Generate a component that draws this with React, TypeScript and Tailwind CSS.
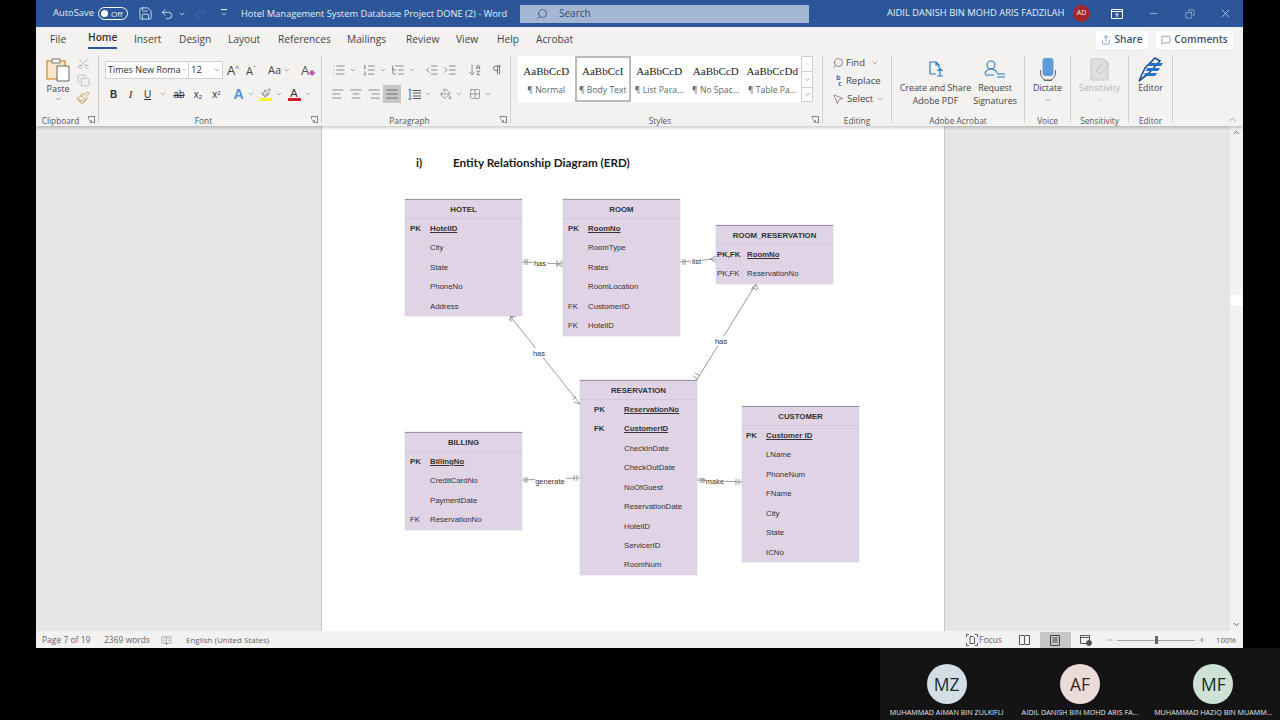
import type { ReactNode } from 'react';
import {
  AlignCenter,
  AlignJustify,
  AlignLeft,
  AlignRight,
  ArrowDownAZ,
  BookOpenText,
  ChevronDown,
  ChevronUp,
  Copy,
  Grid2x2,
  Indent,
  List,
  ListOrdered,
  ListTree,
  MessageSquare,
  Minus,
  MousePointer2,
  Outdent,
  PaintBucket,
  Paintbrush,
  Pilcrow,
  Plus,
  Redo2,
  Save,
  Scissors,
  Search,
  Share,
  Undo2,
  X,
} from 'lucide-react';

function Caret({ className = 'text-[#666]' }: { className?: string }) {
  return <ChevronDown size={8} strokeWidth={1.5} className={className} />;
}

function Slot({ w, children, className = '' }: { w: string; children: ReactNode; className?: string }) {
  return <div className={`flex shrink-0 items-center justify-center gap-[3px] ${w} ${className}`}>{children}</div>;
}

function Launcher() {
  return (
    <svg width="7" height="7" viewBox="0 0 8 8" className="absolute bottom-[0px] right-[3px]" fill="none" stroke="#666">
      <path d="M.5 3V.5H7.5V7.5H5M1 4l3 3M4 5v2H2" />
    </svg>
  );
}

function Group({ w, label, children, launcher }: { w: string; label: string; children: ReactNode; launcher?: boolean }) {
  return (
    <div className={`relative mt-[4px] flex h-[68px] shrink-0 flex-col border-r border-[#d2d0ce] ${w}`}>
      <div className="flex h-[60px] shrink-0 flex-col">{children}</div>
      <div className={`whitespace-nowrap text-center text-[8.3px] leading-[11px] text-[#555] ${launcher ? 'pr-[13px]' : ''}`}>{label}</div>
      {launcher && <Launcher />}
    </div>
  );
}

function TitleBar() {
  return (
    <div className="flex h-[27px] items-center bg-[#2b579a] text-[9.4px] text-[#e8edf5]">
      <span className="ml-[17px] w-[45px]">AutoSave</span>
      <div className="flex h-[13px] w-[30px] items-center gap-[3px] rounded-full border border-white pl-[2px]">
        <span className="h-[7px] w-[7px] rounded-full bg-white" />
        <span className="text-[8px] leading-none">Off</span>
      </div>
      <Save size={15} strokeWidth={1.3} className="ml-[10px]" />
      <Undo2 size={14} strokeWidth={1.4} className="ml-[7px]" />
      <ChevronDown size={8} className="ml-[4px]" />
      <Redo2 size={13} strokeWidth={1.3} className="ml-[8px] text-[#4a73b0]" />
      <div className="ml-[12px] flex w-[9px] flex-col items-center">
        <span className="h-px w-[6px] bg-[#e8edf5]" />
        <ChevronDown size={8} />
      </div>
      <span className="ml-[13px] w-[279px] whitespace-nowrap text-[9.3px]">Hotel Management System Database Project DONE (2)  -  Word</span>
      <div className="flex h-[18px] w-[289px] items-center bg-[#a3b6d4] text-[#304a72]">
        <Search size={12} strokeWidth={1.5} className="ml-[16px] -scale-x-100" />
        <span className="ml-[11px] text-[10px]">Search</span>
      </div>
      <span className="ml-[78px] w-[177px] whitespace-nowrap">AIDIL DANISH BIN MOHD ARIS FADZILAH</span>
      <span className="ml-[9px] flex h-[17px] w-[17px] items-center justify-center rounded-full bg-[#a4262c] text-[7px]">AD</span>
      <svg width="12" height="10" viewBox="0 0 12 10" fill="none" stroke="white" className="ml-[21px]">
        <path d="M.5.5h11v9H.5zM.5 2.500h11M6 8V4.500M4.500 6L6 4.500 7.500 6" />
      </svg>
      <Minus size={11} strokeWidth={1.2} className="ml-[25px]" />
      <Copy size={10} strokeWidth={1.2} className="ml-[26px] -scale-x-100" />
      <X size={13} strokeWidth={1.3} className="ml-[24px]" />
    </div>
  );
}

const tabs = [
  { name: 'Insert', w: 'w-[45px]' },
  { name: 'Design', w: 'w-[49px]' },
  { name: 'Layout', w: 'w-[50px]' },
  { name: 'References', w: 'w-[69px]' },
  { name: 'Mailings', w: 'w-[59px]' },
  { name: 'Review', w: 'w-[50px]' },
  { name: 'View', w: 'w-[41px]' },
  { name: 'Help', w: 'w-[39px]' },
  { name: 'Acrobat', w: 'w-[50px]' },
];

function TabRow() {
  return (
    <div className="flex h-[24px] items-center bg-[#f3f2f1] pt-[1px] text-[10.2px] text-[#444]">
      <span className="ml-[14px] w-[38px]">File</span>
      <div className="flex w-[46px] flex-col">
        <span className="font-semibold text-[#333]">Home</span>
        <span className="mt-[1px] h-[2px] w-[29px] bg-[#2b579a]" />
      </div>
      {tabs.map((t) => (
        <span key={t.name} className={t.w}>
          {t.name}
        </span>
      ))}
      <div className="ml-[510px] flex h-[18px] w-[52px] items-center justify-center gap-[3px] bg-white text-[#2b579a]">
        <Share size={10} strokeWidth={1.3} />
        <span className="font-semibold text-[#44546f]">Share</span>
      </div>
      <div className="ml-[8px] flex h-[18px] w-[77px] items-center justify-center gap-[3px] bg-white">
        <MessageSquare size={10} strokeWidth={1.2} />
        <span className="font-semibold text-[#44546f]">Comments</span>
      </div>
    </div>
  );
}

function ClipboardGroup() {
  return (
    <Group w="w-[63px]" label="Clipboard" launcher>
      <div className="flex pt-[2px]">
        <div className="ml-[8px] flex w-[28px] flex-col items-center">
          <svg width="26" height="26" viewBox="0 0 26 26" fill="none">
            <path d="M2 4h18v18H2z" fill="#f8e6c8" stroke="#d99a4c" strokeWidth="1.5" />
            <path d="M7 2h8v4H7z" fill="#fff" stroke="#777" />
            <path d="M12 9h12v15H12z" fill="#fff" stroke="#666" />
          </svg>
          <span className="text-[9px] leading-[12px] text-[#444]">Paste</span>
          <Caret />
        </div>
        <div className="ml-[4px] flex flex-col items-center gap-[4px] text-[#999]">
          <Scissors size={13} strokeWidth={1} className="-rotate-90" />
          <Copy size={13} strokeWidth={1} />
          <Paintbrush size={14} strokeWidth={1.4} className="text-[#c78a3c]" />
        </div>
      </div>
    </Group>
  );
}

function FontGroup() {
  return (
    <Group w="w-[223px]" label="Font" launcher>
      <div className="mt-[6px] flex h-[18px] items-center pl-[6px]">
        <div className="flex h-[18px] w-[84px] items-center justify-between border border-[#d2d0ce] bg-white pl-[2px] pr-[1px] text-[9px] text-[#333]">
          <span className="whitespace-nowrap">Times New Roma</span>
          <Caret />
        </div>
        <div className="flex h-[18px] w-[34px] items-center justify-between border border-l-0 border-[#d2d0ce] bg-white pl-[2px] pr-[1px] text-[9.5px] text-[#333]">
          <span>12</span>
          <Caret />
        </div>
        <span className="ml-[4px] w-[19px] text-[13px] leading-none text-[#444]">A<sup className="text-[7px]">^</sup></span>
        <span className="w-[18px] text-[11px] leading-none text-[#444]">A<sup className="text-[7px]">ˇ</sup></span>
        <span className="ml-[4px] flex w-[26px] items-center gap-[2px] text-[11px] text-[#444]">Aa<Caret /></span>
        <span className="ml-[7px] text-[13px] leading-none text-[#555]">A<span className="text-[8px] text-[#c054b8]">◆</span></span>
      </div>
      <div className="mt-[6px] flex h-[18px] items-center pl-[6px] font-['Liberation_Sans'] text-[#333]">
        <Slot w="w-[17px]"><b className="text-[10px]">B</b></Slot>
        <Slot w="w-[17px]"><i className="font-['Liberation_Serif'] text-[11px]">I</i></Slot>
        <Slot w="w-[17px]"><u className="text-[10px]">U</u></Slot>
        <Slot w="w-[13px]"><Caret /></Slot>
        <Slot w="w-[20px]"><span className="text-[10px] line-through">ab</span></Slot>
        <Slot w="w-[18px]"><span className="text-[10px]">x<sub className="text-[6px]">2</sub></span></Slot>
        <Slot w="w-[19px]"><span className="text-[10px]">x<sup className="text-[6px]">2</sup></span></Slot>
        <Slot w="w-[31px]" className="pl-[5px]">
          <span className="text-[14px] font-bold leading-none text-[#4a90d9]">A</span>
          <Caret />
        </Slot>
        <Slot w="w-[28px]">
          <div className="flex flex-col items-center">
            <Paintbrush size={10} strokeWidth={1.2} />
            <span className="h-[3px] w-[12px] bg-[#f5ee2e]" />
          </div>
          <Caret />
        </Slot>
        <Slot w="w-[29px]">
          <div className="flex flex-col items-center">
            <span className="text-[11px] leading-[10px]">A</span>
            <span className="h-[3px] w-[13px] bg-[#d01c24]" />
          </div>
          <Caret />
        </Slot>
      </div>
    </Group>
  );
}

function ParagraphGroup() {
  return (
    <Group w="w-[189px]" label="Paragraph" launcher>
      <div className="mt-[6px] flex h-[18px] items-center pl-[7px] text-[#555]">
        <Slot w="w-[30px]"><List size={14} strokeWidth={1.1} /><Caret /></Slot>
        <Slot w="w-[30px]"><ListOrdered size={14} strokeWidth={1.1} /><Caret /></Slot>
        <Slot w="w-[29px]"><ListTree size={14} strokeWidth={1.1} /><Caret /></Slot>
        <Slot w="w-[18px]" className="ml-[5px]"><Outdent size={14} strokeWidth={1.1} /></Slot>
        <Slot w="w-[18px]"><Indent size={14} strokeWidth={1.1} /></Slot>
        <Slot w="w-[25px]" className="ml-[3px]"><ArrowDownAZ size={14} strokeWidth={1.1} /></Slot>
        <Slot w="w-[19px]"><Pilcrow size={12} strokeWidth={1.6} /></Slot>
      </div>
      <div className="mt-[6px] flex h-[18px] items-center pl-[7px] text-[#555]">
        <Slot w="w-[18px]"><AlignLeft size={14} strokeWidth={1.1} /></Slot>
        <Slot w="w-[18px]"><AlignCenter size={14} strokeWidth={1.1} /></Slot>
        <Slot w="w-[18px]"><AlignRight size={14} strokeWidth={1.1} /></Slot>
        <Slot w="w-[18px]" className="h-[18px] bg-[#c8c6c4]"><AlignJustify size={14} strokeWidth={1.3} /></Slot>
        <Slot w="w-[32px]" className="ml-[3px]">
          <svg width="13" height="13" viewBox="0 0 13 13" fill="none" stroke="currentColor" strokeWidth="1">
            <path d="M5 2.500h8M5 5h8M5 8h8M5 10.500h8" />
            <path d="M2 1v11M.5 2.500L2 1l1.500 1.500M.5 10.500L2 12l1.500-1.500" stroke="#2b79c2" />
          </svg>
          <Caret />
        </Slot>
        <Slot w="w-[30px]"><PaintBucket size={12} strokeWidth={1.1} /><Caret /></Slot>
        <Slot w="w-[28px]"><Grid2x2 size={12} strokeWidth={1} /><Caret /></Slot>
      </div>
    </Group>
  );
}

const styleItems = [
  { name: '¶ Normal', sample: 'AaBbCcD' },
  { name: '¶ Body Text', sample: 'AaBbCcI', active: true },
  { name: '¶ List Para...', sample: 'AaBbCcD' },
  { name: '¶ No Spac...', sample: 'AaBbCcD' },
  { name: '¶ Table Pa...', sample: 'AaBbCcDd' },
];

function StylesGroup() {
  return (
    <Group w="w-[312px]" label="Styles" launcher>
      <div className="ml-[7px] mt-[1px] flex h-[46px] w-[295px] bg-white">
        {styleItems.map((s) => (
          <div
            key={s.name}
            className={`flex h-[46px] w-[56.5px] flex-col items-center justify-center gap-[8px] overflow-hidden whitespace-nowrap pt-[2px] ${
              s.active ? 'border-[2px] border-[#bdbbb9]' : ''
            }`}
          >
            <span className="font-['Liberation_Serif'] text-[11px] leading-[12px] text-[#222]">{s.sample}</span>
            <span className="text-[8.6px] leading-[11px] text-[#666]">{s.name}</span>
          </div>
        ))}
        <div className="ml-auto flex w-[12px] flex-col border border-[#d2d0ce] text-[#666]">
          <div className="flex h-[15px] items-center justify-center border-b border-[#d2d0ce] text-[#ccc]"><ChevronUp size={7} /></div>
          <div className="flex h-[16px] items-center justify-center border-b border-[#d2d0ce]"><ChevronDown size={7} /></div>
          <div className="flex h-[13px] items-center justify-center"><ChevronDown size={7} /></div>
        </div>
      </div>
    </Group>
  );
}

function EditingGroup() {
  return (
    <Group w="w-[69px]" label="Editing">
      <div className="flex flex-col gap-[4px] pl-[9px] pt-[1px] text-[9.5px] leading-[14px] text-[#444]">
        <div className="flex items-center gap-[2px]">
          <Search size={12} strokeWidth={1.2} className="-scale-x-100" />
          <span>Find</span>
          <Caret className="ml-[4px] text-[#666]" />
        </div>
        <div className="flex items-center gap-[3px]">
          <span className="flex w-[11px] flex-col text-[7px] font-bold leading-[6px] text-[#2b79c2]">
            <span className="pl-[4px]">b</span>
            <span className="pl-[6px]">c</span>
          </span>
          <span>Replace</span>
        </div>
        <div className="flex items-center gap-[3px]">
          <MousePointer2 size={12} strokeWidth={1.1} />
          <span>Select</span>
          <Caret />
        </div>
      </div>
    </Group>
  );
}

function BigButton({ w, icon, lines, muted }: { w: string; icon: ReactNode; lines: string[]; muted?: boolean }) {
  return (
    <div className={`flex shrink-0 flex-col items-center pt-[2px] ${w}`}>
      <div className="flex h-[24px] items-center">{icon}</div>
      <div className={`mt-[1px] text-center text-[8.9px] leading-[12.5px] ${muted ? 'text-[#b5b3b1]' : 'text-[#444]'}`}>
        {lines.map((l) => (
          <div key={l} className="whitespace-nowrap">{l}</div>
        ))}
      </div>
    </div>
  );
}

function RightGroups() {
  return (
    <>
      <Group w="w-[133px]" label="Adobe Acrobat">
        <div className="flex pl-[7px]">
          <BigButton
            w="w-[73px]"
            lines={['Create and Share', 'Adobe PDF']}
            icon={
              <svg width="16" height="18" viewBox="0 0 16 18" fill="none" stroke="#2b79c2" strokeWidth="1.2">
                <path d="M8 14H2V2h6l3 3v3M8 2v3h3M12 16V9M9.5 11L12 8.500l2.500 2.500M9 16h6" />
              </svg>
            }
          />
          <BigButton
            w="w-[46px]"
            lines={['Request', 'Signatures']}
            icon={
              <svg width="22" height="20" viewBox="0 0 22 20" fill="none" stroke="#2b79c2" strokeWidth="1.1">
                <circle cx="7" cy="6" r="4" />
                <path d="M1 15c0-3 3-5 6-5s5 1 6 4M1 16h9M13 15h8M13 18h8" />
              </svg>
            }
          />
        </div>
      </Group>
      <Group w="w-[46px]" label="Voice">
        <BigButton
          w="w-full"
          lines={['Dictate']}
          icon={
            <svg width="18" height="24" viewBox="0 0 18 24" fill="none">
              <rect x="3.500" y="1" width="11" height="18" rx="3" fill="#5a9bd8" />
              <path d="M1.500 13v3a6 6 0 0 0 15 0v-3M9 22v1.500M5 23.500h8" stroke="#666" strokeWidth="1" />
            </svg>
          }
        />
        <div className="flex justify-center pt-[1px]"><Caret /></div>
      </Group>
      <Group w="w-[58px]" label="Sensitivity">
        <BigButton
          w="w-full"
          muted
          lines={['Sensitivity']}
          icon={
            <svg width="22" height="24" viewBox="0 0 22 24" fill="#e1dfdd" stroke="#c8c6c4">
              <path d="M2 2h13l4 4v17H2z" />
              <path d="M7 14l8-9a3 3 0 0 1 4 4l-8 8z" fill="none" />
            </svg>
          }
        />
        <div className="flex justify-center pt-[1px]"><Caret className="text-[#c8c6c4]" /></div>
      </Group>
      <Group w="w-[44px]" label="Editor">
        <BigButton
          w="w-full"
          lines={['Editor']}
          icon={
            <svg width="26" height="25" viewBox="0 0 26 25">
              <path d="M1 24L7 11 17 1l5 3L10 17z" fill="none" stroke="#1f4e9a" strokeWidth="1.6" />
              <path d="M11 6h14l-2 3H10zM9 11h13l-2 3H8zM7 16h12l-2 3H6z" fill="#2472c8" />
            </svg>
          }
        />
      </Group>
      <ChevronUp size={11} strokeWidth={1.2} className="absolute bottom-[1px] right-[5px] text-[#555]" />
    </>
  );
}

function Ribbon() {
  return (
    <div className="relative z-10 flex h-[75px] bg-[#f3f2f1] shadow-[0_2px_3px_rgba(0,0,0,0.2)]">
      <ClipboardGroup />
      <FontGroup />
      <ParagraphGroup />
      <StylesGroup />
      <EditingGroup />
      <RightGroups />
    </div>
  );
}

interface Row {
  key?: string;
  name: string;
  primary?: boolean;
}

function EntityTable({
  title,
  rows,
  pos,
  keyCol,
}: {
  title: string;
  rows: Row[];
  pos: string;
  keyCol: string;
}) {
  return (
    <div className={`absolute w-[117px] bg-[#dfd3e5] font-['Liberation_Sans'] text-[7.8px] text-[#333] shadow-[0_0_1px_rgba(90,80,100,0.5)] ${pos}`}>
      <div className="flex h-[20px] items-center justify-center border-b border-[#d3c6da] border-t border-t-[#9a90a4] pt-[1px] font-bold">{title}</div>
      {rows.map((r) => (
        <div key={r.name} className="flex h-[19.45px] items-center">
          <span className={`shrink-0 ${keyCol} ${r.primary ? 'font-bold' : ''}`}>{r.key}</span>
          <span className={r.primary ? 'font-bold underline' : ''}>{r.name}</span>
        </div>
      ))}
    </div>
  );
}

function Connectors() {
  const c = { stroke: '#8f8f8f', strokeWidth: 0.9, fill: 'none' };
  return (
    <svg className="absolute left-0 top-0" width="622" height="505" viewBox="322 126 622 505">
      <g {...c}>
        <path d="M522 262L563 264M525 259v6M527 259v6M557 264l6-3M557 264l6 3M557 260v7" />
        <path d="M680 262L716 259M683 259v6M685 259v6M710 259l6-3M710 259l6 3" />
        <path d="M510 316L580 404M509 320l5-4M510 316l1 6M510 316l6 1M576 396l-3 4M580 404l-6-2" />
        <path d="M756 284L696 381M752 287l5 3M756 284l-5 6M756 284l2 6M693 376l5 3M695 373l5 3" />
        <path d="M522 480L580 478M525 477v6M527 477v6M574 475v6M577 475v6" />
        <path d="M697 480L742 482M699 478l5 2M699 483l5-3M736 479v6M739 479v6" />
        <circle cx="703" cy="480.500" r="2" />
      </g>
      <g fontFamily="Liberation Sans" fontSize="7.5" fill="#333" textAnchor="middle">
        <rect x="533" y="258" width="14" height="10" fill="white" />
        <text x="540" y="266">has</text>
        <rect x="691" y="256" width="11" height="10" fill="white" />
        <text x="696.500" y="264">list</text>
        <rect x="532" y="348" width="15" height="10" fill="white" />
        <text x="539" y="356">has</text>
        <rect x="714" y="336" width="15" height="10" fill="white" />
        <text x="721" y="344">has</text>
        <rect x="535" y="476" width="31" height="10" fill="white" />
        <text x="550" y="484">generate</text>
        <rect x="706" y="476" width="19" height="10" fill="white" />
        <text x="715" y="484">make</text>
      </g>
    </svg>
  );
}

function Diagram() {
  return (
    <div className="relative h-[505px] w-[624px] shrink-0 border-x border-[#c8c6c4] bg-white">
      <div className="absolute left-[94px] top-[28px] flex font-['Lato'] text-[11.7px] font-bold text-[#1a1a1a]">
        <span className="w-[37px]">i)</span>
        <span>Entity Relationship Diagram (ERD)</span>
      </div>
      <Connectors />
      <EntityTable
        title="HOTEL"
        pos="left-[83px] top-[73px]"
        keyCol="w-[25px] pl-[5px]"
        rows={[
          { key: 'PK', name: 'HotelID', primary: true },
          { name: 'City' },
          { name: 'State' },
          { name: 'PhoneNo' },
          { name: 'Address' },
        ]}
      />
      <EntityTable
        title="ROOM"
        pos="left-[241px] top-[73px]"
        keyCol="w-[25px] pl-[5px]"
        rows={[
          { key: 'PK', name: 'RoomNo', primary: true },
          { name: 'RoomType' },
          { name: 'Rates' },
          { name: 'RoomLocation' },
          { key: 'FK', name: 'CustomerID' },
          { key: 'FK', name: 'HotelID' },
        ]}
      />
      <EntityTable
        title="ROOM_RESERVATION"
        pos="left-[394px] top-[99px]"
        keyCol="w-[31px] pl-[1px]"
        rows={[
          { key: 'PK,FK', name: 'RoomNo', primary: true },
          { key: 'PK,FK', name: 'ReservationNo' },
        ]}
      />
      <EntityTable
        title="RESERVATION"
        pos="left-[258px] top-[254px]"
        keyCol="w-[44px] pl-[14px]"
        rows={[
          { key: 'PK', name: 'ReservationNo', primary: true },
          { key: 'FK', name: 'CustomerID', primary: true },
          { name: 'CheckInDate' },
          { name: 'CheckOutDate' },
          { name: 'NoOfGuest' },
          { name: 'ReservationDate' },
          { name: 'HotelID' },
          { name: 'ServicerID' },
          { name: 'RoomNum' },
        ]}
      />
      <EntityTable
        title="BILLING"
        pos="left-[83px] top-[306px]"
        keyCol="w-[25px] pl-[5px]"
        rows={[
          { key: 'PK', name: 'BillingNo', primary: true },
          { name: 'CreditCardNo' },
          { name: 'PaymentDate' },
          { key: 'FK', name: 'ReservationNo' },
        ]}
      />
      <EntityTable
        title="CUSTOMER"
        pos="left-[420px] top-[280px]"
        keyCol="w-[24px] pl-[4px]"
        rows={[
          { key: 'PK', name: 'Customer ID', primary: true },
          { name: 'LName' },
          { name: 'PhoneNum' },
          { name: 'FName' },
          { name: 'City' },
          { name: 'State' },
          { name: 'ICNo' },
        ]}
      />
    </div>
  );
}

function DocArea() {
  return (
    <div className="flex h-[505px] bg-[#e6e6e6]">
      <div className="w-[285px] shrink-0" />
      <Diagram />
      <div className="flex-1" />
      <div className="flex w-[13px] shrink-0 flex-col items-center bg-[#f3f2f1] text-[#555]">
        <ChevronUp size={9} strokeWidth={2.5} className="mt-[2px]" />
        <div className="mt-[158px] h-[11px] w-[11px] bg-white" />
        <ChevronDown size={9} strokeWidth={2.5} className="mt-auto mb-[2px]" />
      </div>
    </div>
  );
}

function StatusBar() {
  return (
    <div className="flex h-[17px] items-center bg-[#f3f2f1] pt-[1px] text-[8.5px] text-[#666]">
      <span className="ml-[6px] w-[62px]">Page 7 of 19</span>
      <span className="w-[57px]">2369 words</span>
      <BookOpenText size={11} strokeWidth={1} />
      <span className="ml-[14px] w-[100px] whitespace-nowrap text-[8px]">English (United States)</span>
      <div className="ml-[680px] flex items-center gap-[1px]">
        <svg width="12" height="12" viewBox="0 0 12 12" fill="none" stroke="#555">
          <path d="M.5 3V.5H3M9 .5h2.500V3M11.500 9v2.500H9M3 11.500H.5V9M4 2.500h3l1.500 1.500v5.500H4z" />
        </svg>
        <span>Focus</span>
      </div>
      <svg width="11" height="10" viewBox="0 0 11 10" fill="none" stroke="#555" className="ml-[17px]">
        <path d="M.5.5h4.500l.5.5.5-.5h4.500v9H6l-.5.5-.5-.5H.5zM5.500 1v8" />
      </svg>
      <div className="ml-[10px] flex h-[16px] w-[31px] items-center justify-center bg-[#c8c6c4]">
        <svg width="10" height="11" viewBox="0 0 10 11" fill="none" stroke="#444">
          <path d="M.5.5h9v10h-9zM2.500 3h5M2.500 5h5M2.500 7h5" />
        </svg>
      </div>
      <svg width="12" height="11" viewBox="0 0 12 11" fill="none" stroke="#555" className="ml-[9px]">
        <path d="M.5.5h9v8h-9zM.5 2.500h9" />
        <circle cx="9" cy="8" r="2.500" fill="#555" />
      </svg>
      <Minus size={8} strokeWidth={1.5} className="ml-[14px]" />
      <div className="relative ml-[3px] flex w-[78px] items-center">
        <div className="h-px w-full bg-[#a6a6a6]" />
        <div className="absolute left-[38px] h-[8px] w-[3px] bg-[#666]" />
      </div>
      <Plus size={8} strokeWidth={1.5} className="ml-[3px]" />
      <span className="ml-[10px] text-[8px]">100%</span>
    </div>
  );
}

const people = [
  { initials: 'MZ', name: 'MUHAMMAD AIMAN BIN ZULKIFLI', bg: 'bg-[#d3dde6]', text: 'text-[#1c2c3a]' },
  { initials: 'AF', name: 'AIDIL DANISH BIN MOHD ARIS FA...', bg: 'bg-[#ebdcd7]', text: 'text-[#3a2418]' },
  { initials: 'MF', name: 'MUHAMMAD  HAZIQ BIN MUAMM...', bg: 'bg-[#cfe0d6]', text: 'text-[#12301f]' },
];

function MeetingStrip() {
  return (
    <div className="ml-[880px] flex h-[72px] w-[400px] bg-[#141414]">
      {people.map((p) => (
        <div key={p.initials} className="flex w-[133.33px] flex-col items-center pt-[16px]">
          <div className={`flex h-[40px] w-[40px] items-center justify-center rounded-full text-[17.5px] ${p.bg} ${p.text}`}>
            {p.initials}
          </div>
          <span className="mt-[3px] whitespace-nowrap text-[7.2px] leading-[11px] text-[#e6e6e6]">{p.name}</span>
        </div>
      ))}
    </div>
  );
}

export default function App() {
  return (
    <div className="h-[720px] w-[1280px] overflow-hidden bg-black font-['Open_Sans']">
      <div className="ml-[36px] w-[1207px]">
        <TitleBar />
        <TabRow />
        <Ribbon />
        <DocArea />
        <StatusBar />
      </div>
      <MeetingStrip />
    </div>
  );
}
